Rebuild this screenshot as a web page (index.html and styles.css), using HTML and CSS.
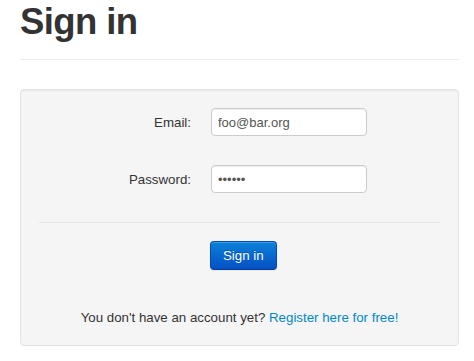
FILE: index.html
```html
<!DOCTYPE html>
<html>
<head>
<meta charset="utf-8">
<link rel="stylesheet" href="styles.css">
</head>
<body>
<div class="page">
  <div class="page-header">
    <h1>Sign in</h1>
  </div>
  <form class="well">
    <div class="row">
      <label class="label" for="email">Email:</label>
      <input class="input" id="email" type="text" value="foo@bar.org">
    </div>
    <div class="row row-second">
      <label class="label" for="password">Password:</label>
      <input class="input" id="password" type="password" value="foobar">
    </div>
    <div class="divider"></div>
    <div class="actions">
      <button class="btn" type="button">Sign in</button>
    </div>
    <p class="register">You don't have an account yet? <a href="#">Register here for free!</a></p>
  </form>
</div>
</body>
</html>
```

FILE: styles.css
```css
html, body {
  margin: 0;
  padding: 0;
  background: #fff;
}
body {
  font-family: "Liberation Sans", Arial, sans-serif;
  font-size: 13.3px;
  color: #333;
}
.page {
  padding: 0 15px 0 20px;
}
.page-header {
  padding-bottom: 15px;
  border-bottom: 1px solid #eee;
  margin-bottom: 29px;
}
.page-header h1 {
  margin: 0;
  font-size: 36.5px;
  line-height: 44px;
  font-weight: bold;
  letter-spacing: -0.6px;
  color: #333;
}
.well {
  margin: 0;
  background: #f5f5f5;
  border: 1px solid #e3e3e3;
  border-radius: 4px;
  box-shadow: inset 0 1px 1px rgba(0,0,0,0.05);
  padding: 18px 18px 18px 18px;
}
.row {
  display: flex;
  align-items: center;
  gap: 20px;
}
.row-second {
  margin-top: 29px;
}
.label {
  width: 152px;
  text-align: right;
  line-height: 19px;
}
.input {
  box-sizing: border-box;
  width: 156px;
  height: 28px;
  margin: 0;
  padding: 4px 6px;
  font-family: "Liberation Sans", Arial, sans-serif;
  font-size: 13px;
  color: #555;
  background: #fff;
  border: 1px solid #ccc;
  border-radius: 4px;
  box-shadow: inset 0 1px 1px rgba(0,0,0,0.075);
  outline: none;
}
.divider {
  margin-top: 29px;
  height: 0;
  border-top: 1px solid #e6e6e6;
}
.actions {
  margin-top: 18px;
  padding-left: 171px;
  display: flex;
}
.btn {
  box-sizing: border-box;
  height: 29px;
  padding: 0 12px;
  font-family: "Liberation Sans", Arial, sans-serif;
  font-size: 13.3px;
  color: #fff;
  text-shadow: 0 -1px 0 rgba(0,0,0,0.25);
  background: linear-gradient(to bottom, #0a82d8, #0450c6);
  border: 1px solid #0449b5;
  border-bottom-color: #033d99;
  border-radius: 4px;
  box-shadow: inset 0 1px 0 rgba(255,255,255,0.2), 0 1px 2px rgba(0,0,0,0.05);
  cursor: pointer;
}
.register {
  margin: 38px 0 0 0;
  text-align: center;
  line-height: 19px;
}
.register a {
  color: #0088cc;
  text-decoration: none;
}
```
